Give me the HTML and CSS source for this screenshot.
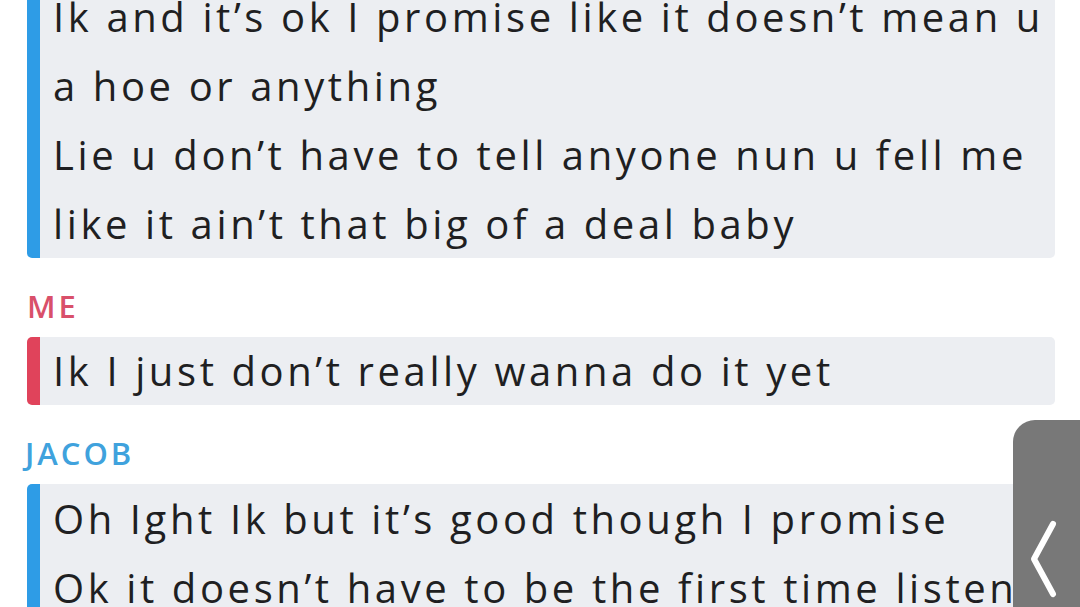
FILE: index.html
```html
<!DOCTYPE html>
<html lang="en">
<head>
    <meta charset="UTF-8">
    <meta name="viewport" content="width=device-width, initial-scale=1.0">
    <title>Chat</title>
    <link rel="stylesheet" href="styles.css">
</head>
<body>

    <div class="chat">
        <div class="message from-them first">
            <p>Ik and it’s ok I promise like it doesn’t mean u<br>a hoe or anything</p>
            <p>Lie u don’t have to tell anyone nun u fell me<br>like it ain’t that big of a deal baby</p>
        </div>

        <div class="sender me">ME</div>
        <div class="message from-me">
            <p>Ik I just don’t really wanna do it yet</p>
        </div>

        <div class="sender them">JACOB</div>
        <div class="message from-them last">
            <p>Oh Ight Ik but it’s good though I promise</p>
            <p>Ok it doesn’t have to be the first time listen</p>
        </div>
    </div>

    <div class="side-tab">
        <svg width="40" height="90" viewBox="0 0 40 90">
            <polyline points="24,8 5,43 24,78" fill="none" stroke="#fff" stroke-width="6" stroke-linecap="round" stroke-linejoin="round"/>
        </svg>
    </div>

</body>
</html>
```

FILE: styles.css
```css
body {
    margin: 0;
    background-color: #fff;
    font-family: "Open Sans", Lato, sans-serif;
    color: #1f1f22;
    overflow: hidden;
    height: 607px;
}

.chat {
    padding: 0 25px 0 27px;
    margin-top: -18px;
}

.message {
    background-color: #eceef2;
    border-left: 13px solid #2e9ce6;
    border-radius: 5px;
    padding-left: 13px;
    white-space: nowrap;
    overflow: hidden;
}

.message p {
    margin: 0;
    font-size: 40px;
    font-weight: 500;
    line-height: 69px;
    letter-spacing: 3.6px;
    font-variant-ligatures: none;
}

.from-me {
    border-left-color: #e0435b;
}

.from-me p {
    line-height: 68px;
}

.sender {
    font-size: 31px;
    font-weight: 600;
    letter-spacing: 3px;
    line-height: 40px;
    padding: 28px 0 11px;
}

.me {
    color: #d9506a;
}

.them {
    color: #3fa2dd;
    margin-left: -2px;
}

.side-tab {
    position: absolute;
    right: 0;
    top: 420px;
    width: 67px;
    height: 187px;
    background-color: #787878;
    border-top-left-radius: 22px;
}

.side-tab svg {
    position: absolute;
    left: 16px;
    top: 96px;
}
```
